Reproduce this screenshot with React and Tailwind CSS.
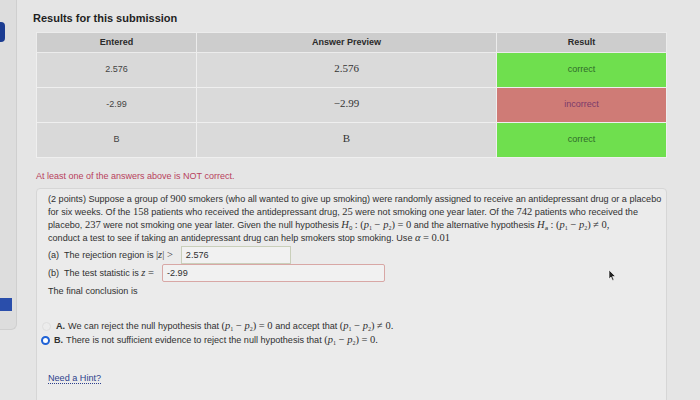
import React from "react";

function M({ children, className = "" }) {
  return (
    <span className={`font-['Liberation_Serif',serif] text-[10.5px] leading-none ${className}`}>
      {children}
    </span>
  );
}

function I({ children }) {
  return <span className="font-['Liberation_Serif',serif] italic text-[10.5px] leading-none">{children}</span>;
}

function Sub({ children, className = "" }) {
  return <span className={`relative top-[2px] text-[6px] leading-none ${className}`}>{children}</span>;
}

function Diff() {
  return (
    <M>
      (<i>p</i>
      <Sub>1</Sub> − <i>p</i>
      <Sub>2</Sub>)
    </M>
  );
}

const rows = [
  { entered: "2.576", preview: "2.576", ok: true },
  { entered: "-2.99", preview: "−2.99", ok: false },
  { entered: "B", preview: "B", ok: true },
];

export default function App() {
  return (
    <div className="relative w-[700px] h-[400px] overflow-hidden bg-[#e5e5e5] flex font-['Liberation_Sans',Arial,sans-serif] text-[#2a2a2a]">
      {/* left rail */}
      <aside className="w-[17px] h-[330px] shrink-0 bg-[#dddddd] border-r border-b border-[#cfcfcf] rounded-br-md">
        <div className="mt-[22px] w-[5px] h-[20px] bg-[#1b3c91] rounded-r-sm" />
        <div className="mt-[256px] w-[12px] h-[13px] bg-[#2a4eab]" />
      </aside>

      <main className="pl-[16px] pt-[11px] flex-1">
        <h2 className="text-[11px] font-semibold text-[#1f1f1f] leading-[14px]">
          Results for this submission
        </h2>

        <table className="mt-[7px] ml-[3px] w-[631px] border-collapse text-[9px]">
          <thead>
            <tr className="h-[20px] bg-[#cdcdcd]">
              <th className="w-[160px] font-semibold border border-[#ececec]">Entered</th>
              <th className="w-[300px] font-semibold border border-[#ececec]">Answer Preview</th>
              <th className="font-semibold border border-[#ececec]">Result</th>
            </tr>
          </thead>
          <tbody>
            {rows.map((r, i) => (
              <tr key={i} className="h-[35px]">
                <td className="text-center bg-[#d9d9d9] border border-[#efefef] text-[#444]">
                  {r.entered}
                </td>
                <td className="text-center bg-[#dadada] border border-[#efefef]">
                  <M className="text-[11px] text-[#333]">{r.preview}</M>
                </td>
                <td
                  className={`text-center border border-[#efefef] ${
                    r.ok ? "bg-[#6fdf4e] text-[#2f6b2a]" : "bg-[#cf7b76] text-[#7a3a6a]"
                  }`}
                >
                  {r.ok ? "correct" : "incorrect"}
                </td>
              </tr>
            ))}
          </tbody>
        </table>

        <p className="mt-[12px] ml-[3px] text-[9px] leading-[12px] text-[#b8415c]">
          At least one of the answers above is NOT correct.
        </p>

        <section className="mt-[6px] ml-[3px] w-[631px] h-[220px] bg-[#ebebeb] border border-[#d6d6d6] rounded-sm pl-[11px] pt-[4px] text-[9.1px] leading-[13px] text-[#303030]">
          <div className="whitespace-nowrap h-[13px]">
            (2 points) Suppose a group of <M>900</M> smokers (who all wanted to give up smoking) were randomly assigned to receive an antidepressant drug or a placebo
          </div>
          <div className="whitespace-nowrap h-[13px]">
            for six weeks. Of the <M>158</M> patients who received the antidepressant drug, <M>25</M> were not smoking one year later. Of the <M>742</M> patients who received the
          </div>
          <div className="whitespace-nowrap h-[13px]">
            placebo, <M>237</M> were not smoking one year later. Given the null hypothesis{" "}
            <I>H</I>
            <Sub>0</Sub> <M>:</M> <Diff /> <M>= 0</M> and the alternative hypothesis{" "}
            <I>H</I>
            <Sub className="italic">a</Sub> <M>:</M> <Diff /> <M>≠ 0,</M>
          </div>
          <div className="whitespace-nowrap h-[13px]">
            conduct a test to see if taking an antidepressant drug can help smokers stop smoking. Use <I>α</I> <M>= 0.01</M>
          </div>

          <div className="mt-[1px] flex items-center h-[18px]">
            <span className="w-[16px]">(a)</span>
            <span>
              The rejection region is <M>|<i>z</i>| &gt;</M>
            </span>
            <div className="ml-[8px] w-[110px] h-[18px] bg-[#f1f1f1] border border-[#c9cfba] flex items-center pl-[4px]">
              2.576
            </div>
          </div>
          <div className="flex items-center h-[18px]">
            <span className="w-[16px]">(b)</span>
            <span>
              The test statistic is <M><i>z</i> =</M>
            </span>
            <div className="ml-[8px] w-[223px] h-[18px] bg-[#f1f1f1] border border-[#d8a7a5] rounded-[2px] flex items-center pl-[4px]">
              -2.99
            </div>
          </div>
          <div className="mt-[3px]">The final conclusion is</div>

          <div className="mt-[21px] -ml-[6px] flex items-center h-[14px]">
            <span className="w-[9px] h-[9px] rounded-full border border-[#dedede] bg-[#ececec]" />
            <span className="ml-[5px] font-semibold">A.</span>
            <span className="ml-[3px] whitespace-nowrap">
              We can reject the null hypothesis that <Diff /> <M>= 0</M> and accept that <Diff /> <M>≠ 0.</M>
            </span>
          </div>
          <div className="-ml-[7px] flex items-center h-[14px]">
            <span className="w-[9px] h-[9px] rounded-full border-[2.5px] border-[#1f62d6] bg-white" />
            <span className="ml-[4px] font-semibold">B.</span>
            <span className="ml-[3px] whitespace-nowrap">
              There is not sufficient evidence to reject the null hypothesis that <Diff /> <M>= 0.</M>
            </span>
          </div>

          <div className="mt-[25px]">
            <span className="text-[#2c3f8c] border-b border-dotted border-[#2c3f8c]">Need a Hint?</span>
          </div>
        </section>
      </main>

      {/* mouse pointer */}
      <svg className="absolute left-[608px] top-[270px]" width="8" height="11" viewBox="0 0 8 11">
        <path d="M1 0 L1 9 L3 7 L4.5 10.5 L6 10 L4.5 6.5 L7.5 6.5 Z" fill="#222" stroke="#fff" strokeWidth="0.6" />
      </svg>
    </div>
  );
}
